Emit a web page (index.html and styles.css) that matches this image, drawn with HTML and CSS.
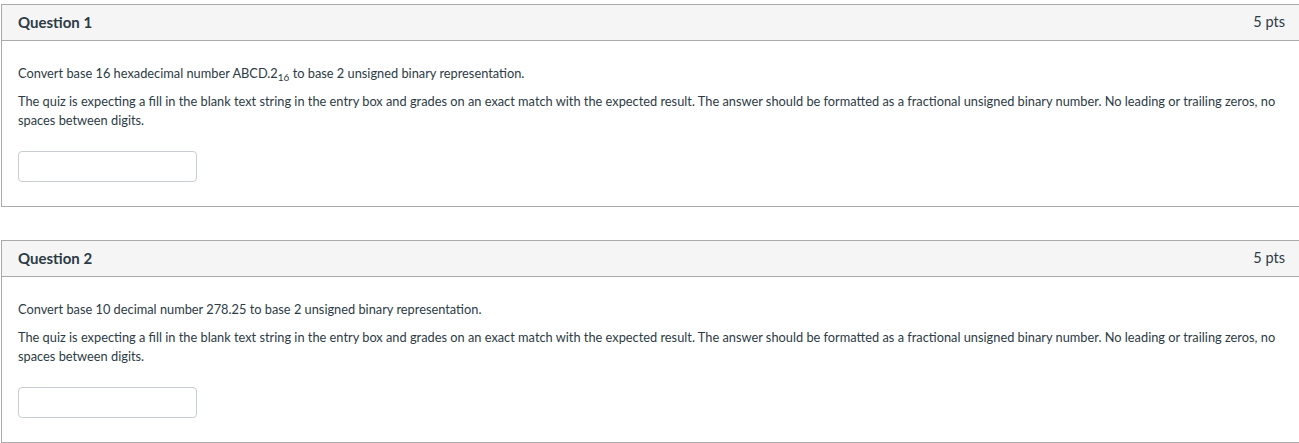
FILE: index.html
```html
<!DOCTYPE html>
<html>
<head>
<meta charset="utf-8">
<link rel="stylesheet" href="styles.css">
</head>
<body>
<div class="page">
  <div class="question">
    <div class="q-header">
      <span class="q-title">Question 1</span>
      <span class="q-pts">5 pts</span>
    </div>
    <div class="q-body">
      <p>Convert base 16 hexadecimal number ABCD.2<sub>16</sub> to base 2 unsigned binary representation.</p>
      <p>The quiz is expecting a fill in the blank text string in the entry box and grades on an exact match with the expected result. The answer should be formatted as a fractional unsigned binary number. No leading or trailing zeros, no spaces between digits.</p>
      <input class="answer" type="text">
    </div>
  </div>
  <div class="question">
    <div class="q-header">
      <span class="q-title">Question 2</span>
      <span class="q-pts">5 pts</span>
    </div>
    <div class="q-body">
      <p>Convert base 10 decimal number 278.25 to base 2 unsigned binary representation.</p>
      <p>The quiz is expecting a fill in the blank text string in the entry box and grades on an exact match with the expected result. The answer should be formatted as a fractional unsigned binary number. No leading or trailing zeros, no spaces between digits.</p>
      <input class="answer" type="text">
    </div>
  </div>
</div>
</body>
</html>
```
FILE: styles.css
```css
html, body {
  margin: 0;
  padding: 0;
  background: #ffffff;
  overflow: hidden;
}
body {
  font-family: Lato, "Open Sans", sans-serif;
  color: #2d3b45;
}
.page {
  padding: 4px 0 0 1px;
  width: 1300px;
  display: flex;
  flex-direction: column;
  gap: 33px;
}
.question {
  border: 1px solid #aaaaaa;
  background: #ffffff;
}
.q-header {
  background: #f5f5f5;
  border-bottom: 1px solid #aaaaaa;
  height: 35px;
  padding: 0 15px 0 16px;
  display: flex;
  align-items: center;
  justify-content: space-between;
}
.q-title {
  font-weight: 700;
  font-size: 15px;
  position: relative;
  top: -1px;
}
.q-pts {
  font-weight: 400;
  font-size: 14.5px;
  position: relative;
  top: -1px;
}
.q-body {
  padding: 23px 16px 24px 16px;
  font-size: 12.8px;
  line-height: 19px;
}
.q-body p {
  margin: 0 0 9px 0;
}
.q-body sub {
  font-size: 10px;
  line-height: 0;
  vertical-align: -3px;
}
.answer {
  display: block;
  margin-top: 21px;
  width: 179px;
  height: 31px;
  box-sizing: border-box;
  border: 1px solid #c7cdd1;
  border-radius: 4px;
  background: #fff;
  padding: 0 6px;
}
```
